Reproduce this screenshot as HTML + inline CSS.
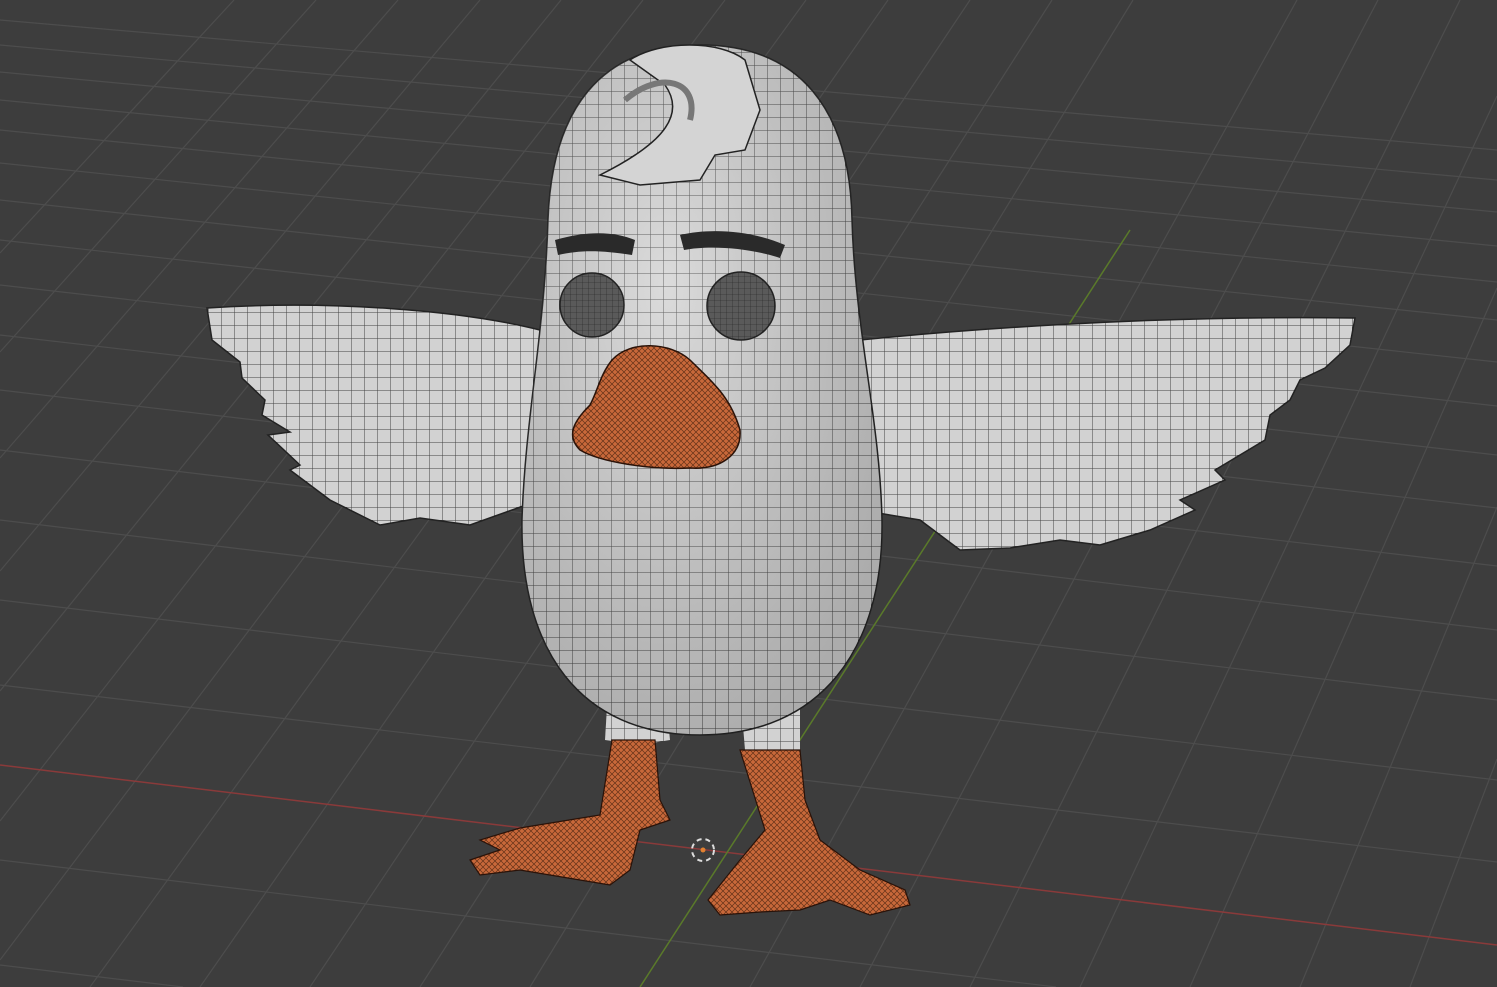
<!DOCTYPE html>
<html><head><meta charset="utf-8"><style>
html,body{margin:0;padding:0;background:#3d3d3d;overflow:hidden;width:1497px;height:987px}
svg{display:block}
</style></head><body>
<svg width="1497" height="987" viewBox="0 0 1497 987" xmlns="http://www.w3.org/2000/svg">
<defs>
<clipPath id="frame"><rect width="1497" height="987"/></clipPath>
<pattern id="mesh" width="13" height="13" patternUnits="userSpaceOnUse">
<rect width="13" height="13" fill="#d2d2d2"/>
<path d="M0 0H13M0 0V13" stroke="#1e1e1e" stroke-width="1" opacity="0.8"/>
</pattern>
<pattern id="meshO" width="6" height="6" patternUnits="userSpaceOnUse">
<rect width="6" height="6" fill="#c8683a"/>
<path d="M0 0L6 6M0 6L6 0" stroke="#3a1a0a" stroke-width="0.7" opacity="0.7"/>
</pattern>
<pattern id="meshE" width="6" height="6" patternUnits="userSpaceOnUse">
<rect width="6" height="6" fill="#5a5a5a"/>
<path d="M0 0H6M0 0V6" stroke="#222" stroke-width="0.6"/>
</pattern>
<radialGradient id="shade" cx="0.4" cy="0.35" r="0.7">
<stop offset="0" stop-color="#fff" stop-opacity="0.2"/>
<stop offset="1" stop-color="#000" stop-opacity="0.18"/>
</radialGradient>
</defs>
<g clip-path="url(#frame)">
<rect width="1497" height="987" fill="#3d3d3d"/>
<g stroke="#4d4d4d" stroke-width="1.2" fill="none">
<line x1="0" y1="20" x2="1497" y2="150"/>
<line x1="0" y1="45" x2="1497" y2="180"/>
<line x1="0" y1="72" x2="1497" y2="212"/>
<line x1="0" y1="100" x2="1497" y2="246"/>
<line x1="0" y1="130" x2="1497" y2="282"/>
<line x1="0" y1="163" x2="1497" y2="320"/>
<line x1="0" y1="200" x2="1497" y2="362"/>
<line x1="0" y1="240" x2="1497" y2="406"/>
<line x1="0" y1="285" x2="1497" y2="455"/>
<line x1="0" y1="335" x2="1497" y2="508"/>
<line x1="0" y1="390" x2="1497" y2="566"/>
<line x1="0" y1="450" x2="1497" y2="630"/>
<line x1="0" y1="520" x2="1497" y2="700"/>
<line x1="0" y1="600" x2="1497" y2="780"/>
<line x1="0" y1="685" x2="1497" y2="862"/>
<line x1="0" y1="860" x2="1056" y2="987"/>
<line x1="0" y1="965" x2="183" y2="987"/>
<line x1="0" y1="253" x2="234" y2="0"/>
<line x1="0" y1="352" x2="316" y2="0"/>
<line x1="0" y1="458" x2="398" y2="0"/>
<line x1="0" y1="571" x2="480" y2="0"/>
<line x1="0" y1="691" x2="561" y2="0"/>
<line x1="0" y1="821" x2="643" y2="0"/>
<line x1="0" y1="960" x2="725" y2="0"/>
<line x1="90" y1="987" x2="806" y2="0"/>
<line x1="200" y1="987" x2="888" y2="0"/>
<line x1="310" y1="987" x2="970" y2="0"/>
<line x1="420" y1="987" x2="1052" y2="0"/>
<line x1="530" y1="987" x2="1133" y2="0"/>
<line x1="750" y1="987" x2="1297" y2="0"/>
<line x1="860" y1="987" x2="1378" y2="0"/>
<line x1="970" y1="987" x2="1460" y2="0"/>
<line x1="1080" y1="987" x2="1497" y2="96"/>
<line x1="1190" y1="987" x2="1497" y2="288"/>
<line x1="1300" y1="987" x2="1497" y2="507"/>
<line x1="1410" y1="987" x2="1497" y2="759"/>
</g>
<line x1="0" y1="765" x2="1497" y2="945" stroke="#8a3a3a" stroke-width="1.5"/>
<line x1="640" y1="987" x2="1130" y2="230" stroke="#5a7a2a" stroke-width="1.5"/>

<path d="M540 330 C460 310 330 300 207 308 L212 340 L240 362 L242 378 L265 400 L262 415 L290 432 L268 435 L300 465 L290 470 L330 500 L380 525 L420 518 L470 525 L540 500 Z" fill="url(#mesh)" stroke="#222" stroke-width="1.5"/>
<path d="M860 340 C960 330 1150 315 1355 318 L1350 345 L1325 368 L1300 380 L1290 400 L1270 415 L1265 440 L1240 455 L1215 470 L1225 480 L1180 500 L1195 510 L1150 530 L1100 545 L1060 540 L1010 548 L960 550 L920 520 L860 510 Z" fill="url(#mesh)" stroke="#222" stroke-width="1.5"/>
<path d="M608 690 L665 690 L670 740 L640 745 L605 740 Z" fill="url(#mesh)"/>
<path d="M740 690 L800 690 L800 750 L745 750 Z" fill="url(#mesh)"/>
<path d="M700 45 C800 45 850 110 852 220 C855 330 880 420 882 520 C884 650 820 735 700 735 C580 735 520 650 522 520 C525 420 545 330 548 220 C552 110 600 45 700 45 Z" fill="url(#mesh)" stroke="#222" stroke-width="1.5"/>
<path d="M700 45 C800 45 850 110 852 220 C855 330 880 420 882 520 C884 650 820 735 700 735 C580 735 520 650 522 520 C525 420 545 330 548 220 C552 110 600 45 700 45 Z" fill="url(#shade)"/>
<path d="M630 60 C660 40 720 40 745 60 L760 110 L745 150 L715 155 L700 180 L640 185 L600 175 C650 150 690 120 665 85 Z" fill="#d4d4d4" stroke="#222" stroke-width="1.5"/>
<path d="M625 100 C660 70 700 80 690 120" fill="none" stroke="#777" stroke-width="6"/>
<path d="M555 240 C590 230 615 232 635 240 L632 255 C600 250 580 250 558 255 Z" fill="#2a2a2a"/>
<path d="M680 235 C710 228 750 230 785 245 L780 258 C750 248 710 245 684 250 Z" fill="#2a2a2a"/>
<circle cx="592" cy="305" r="32" fill="url(#meshE)" stroke="#222" stroke-width="1.5"/>
<circle cx="741" cy="306" r="34" fill="url(#meshE)" stroke="#222" stroke-width="1.5"/>
<path d="M612 360 C630 340 670 342 690 360 C710 380 730 395 740 430 C742 455 720 470 690 468 C650 470 600 462 580 450 C565 435 575 420 590 405 C598 390 600 375 612 360 Z" fill="url(#meshO)" stroke="#2a1208" stroke-width="1.5"/>
<path d="M612 740 L655 740 L660 800 L670 820 L640 830 L630 870 L610 885 L580 880 L520 870 L480 875 L470 860 L500 850 L480 840 L520 828 L600 815 Z" fill="url(#meshO)" stroke="#2a1208" stroke-width="1.2"/>
<path d="M740 750 L800 750 L805 800 L820 840 L860 870 L905 890 L910 905 L870 915 L830 900 L800 910 L760 912 L720 915 L708 900 L740 860 L765 830 Z" fill="url(#meshO)" stroke="#2a1208" stroke-width="1.2"/>
<circle cx="703" cy="850" r="11" fill="none" stroke="#ddd" stroke-width="2" stroke-dasharray="5 4"/>
<circle cx="703" cy="850" r="2.5" fill="#e08030"/>
</g>
</svg>
</body></html>
